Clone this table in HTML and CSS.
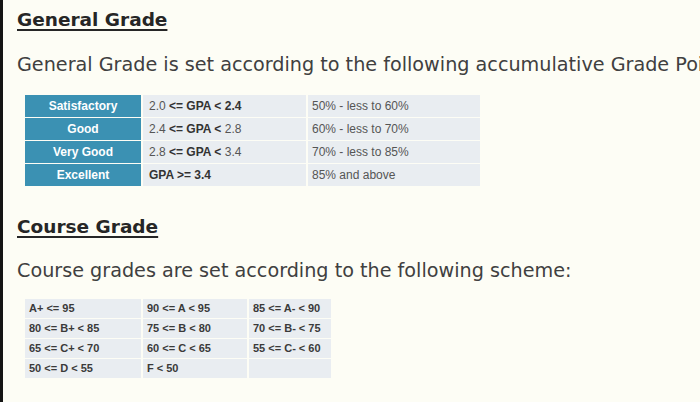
FILE: index.html
```html
<!DOCTYPE html>
<html>
<head>
<meta charset="utf-8">
<link rel="stylesheet" href="styles.css">
</head>
<body>
<div class="page">
  <h2 class="heading">General Grade</h2>
  <p class="lead">General Grade is set according to the following accumulative Grade Point</p>
  <div class="gtable">
    <div class="lbl">Satisfactory</div>
    <div class="cell">2.0 <b>&lt;= GPA &lt; 2.4</b></div>
    <div class="cell pct">50% - less to 60%</div>
    <div class="lbl">Good</div>
    <div class="cell">2.4 <b>&lt;= GPA &lt;</b> 2.8</div>
    <div class="cell pct">60% - less to 70%</div>
    <div class="lbl">Very Good</div>
    <div class="cell">2.8 <b>&lt;= GPA &lt;</b> 3.4</div>
    <div class="cell pct">70% - less to 85%</div>
    <div class="lbl">Excellent</div>
    <div class="cell"><b>GPA &gt;= 3.4</b></div>
    <div class="cell pct">85% and above</div>
  </div>

  <h2 class="heading second">Course Grade</h2>
  <p class="lead lead2">Course grades are set according to the following scheme:</p>
  <div class="ctable">
    <div class="ccell">A+ &lt;= 95</div>
    <div class="ccell">90 &lt;= A &lt; 95</div>
    <div class="ccell">85 &lt;= A- &lt; 90</div>
    <div class="ccell">80 &lt;= B+ &lt; 85</div>
    <div class="ccell">75 &lt;= B &lt; 80</div>
    <div class="ccell">70 &lt;= B- &lt; 75</div>
    <div class="ccell">65 &lt;= C+ &lt; 70</div>
    <div class="ccell">60 &lt;= C &lt; 65</div>
    <div class="ccell">55 &lt;= C- &lt; 60</div>
    <div class="ccell">50 &lt;= D &lt; 55</div>
    <div class="ccell">F &lt; 50</div>
    <div class="ccell"></div>
  </div>
</div>
</body>
</html>
```

FILE: styles.css
```css
html, body {
  margin: 0;
  padding: 0;
  height: 100%;
  overflow: hidden;
}
body {
  background: #fdfdf5;
  border-left: 3px solid #141414;
  box-sizing: border-box;
  font-family: "DejaVu Sans", Verdana, sans-serif;
}
.page {
  padding: 8px 0 0 14px;
}
.heading {
  margin: 0;
  font-size: 18.5px;
  line-height: 24px;
  font-weight: bold;
  color: #262626;
  text-decoration: underline;
  text-decoration-thickness: 2px;
  text-underline-offset: 3px;
}
.lead {
  margin: 21px 0 0 0;
  font-size: 19.2px;
  line-height: 24px;
  color: #404040;
  white-space: nowrap;
}
.gtable {
  margin: 18px 0 0 8px;
  display: grid;
  grid-template-columns: 116px 163px 172px;
  grid-auto-rows: 22px;
  column-gap: 2px;
  row-gap: 1px;
  width: max-content;
  font-family: "Liberation Sans", Arial, sans-serif;
  font-size: 12px;
}
.lbl {
  background: #3b91b3;
  color: #fff;
  font-weight: bold;
  text-align: center;
  line-height: 22px;
}
.cell {
  background: #e9edf1;
  color: #555;
  line-height: 22px;
  padding-left: 6px;
}
.cell b {
  color: #333;
}
.cell.pct {
  padding-left: 4px;
}
.second {
  margin-top: 29px;
}
.lead2 {
  margin-top: 20px;
}
.ctable {
  margin: 16px 0 0 8px;
  display: grid;
  grid-template-columns: 116px 104px 82px;
  grid-auto-rows: 19px;
  column-gap: 2px;
  row-gap: 1px;
  width: max-content;
  font-family: "Liberation Sans", Arial, sans-serif;
  font-size: 11px;
  font-weight: bold;
  color: #3a3a3a;
}
.ccell {
  background: #e9edf1;
  line-height: 19px;
  padding-left: 4px;
}
```
